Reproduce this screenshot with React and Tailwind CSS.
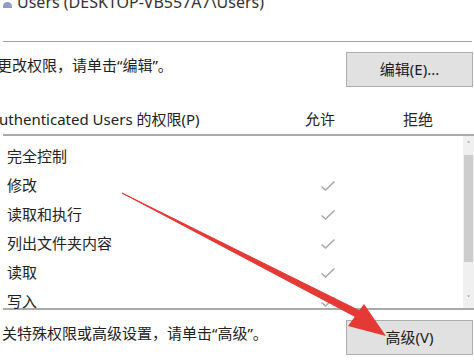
import React from 'react';

const FONT = { fontFamily: '"Noto Sans", "Noto Sans CJK SC", sans-serif' };

const ROWS = [
  { label: '完全控制', allow: false },
  { label: '修改', allow: true },
  { label: '读取和执行', allow: true },
  { label: '列出文件夹内容', allow: true },
  { label: '读取', allow: true },
  { label: '写入', allow: true },
];

function Check() {
  return (
    <svg width="16" height="12" viewBox="0 0 16 12" fill="none">
      <path d="M1.5 6.5 L5.5 10 L14.5 1.5" stroke="#a8a8a8" strokeWidth="1.6" />
    </svg>
  );
}

function Button({ children }) {
  return (
    <div className="w-[127px] h-[35px] bg-[#e1e1e1] border border-[#adadad] flex items-center justify-center text-[15px] text-[#1a1a1a]">
      {children}
    </div>
  );
}

export default function App() {
  return (
    <div
      className="relative w-[474px] h-[364px] overflow-hidden bg-white text-[#222]"
      style={FONT}
    >
      {/* object name, cut at top */}
      <div className="flex items-center gap-[5px] pl-[3px] -mt-[9px] h-[22px] text-[16px] leading-none text-[#333]">
        <span className="w-[9px] h-[6px] mt-[6px] rounded-t-full bg-[#8aa0c4]" />
        <span>Users (DESKTOP-VB557A7\Users)</span>
      </div>

      <div className="mt-[28px] ml-[3px] mr-[2px] h-px bg-[#a0a0a0]" />

      {/* edit row */}
      <div className="mt-[10px] flex items-start justify-between">
        <span className="text-[15px] leading-none mt-[6px] -ml-[3px]">更改权限，请单击“编辑”。</span>
        <div className="mr-[1px]">
          <Button>编辑(E)...</Button>
        </div>
      </div>

      {/* header */}
      <div className="mt-[22px] flex items-center h-[20px] text-[15px] leading-none">
        <span className="-ml-[1px] w-[306px]">uthenticated Users 的权限(P)</span>
        <span className="w-[98px]">允许</span>
        <span>拒绝</span>
      </div>

      {/* permission list */}
      <div className="mt-[5px] ml-[3px] mr-0 flex border-t-2 border-b-2 border-[#aaaaaa] h-[176px]">
        <div className="flex-1 pt-[6px]">
          {ROWS.map((r) => (
            <div key={r.label} className="h-[29px] flex items-center text-[15px] leading-none">
              <span className="pl-[4px] w-[315px]">{r.label}</span>
              <span className="w-[20px] flex justify-center">{r.allow && <Check />}</span>
            </div>
          ))}
        </div>
        <div className="w-[11px] bg-[#f0f0f0] flex flex-col items-center">
          <span className="text-[9px] leading-none text-[#555] mt-[4px]">&#x2c4;</span>
          <div className="mt-[6px] w-[9px] h-[107px] bg-[#cdcdcd]" />
          <div className="flex-1" />
          <span className="text-[9px] leading-none text-[#555] mb-[5px]">&#x2c5;</span>
        </div>
      </div>

      {/* advanced row */}
      <div className="mt-[10px] flex items-start justify-between">
        <span className="text-[15px] leading-none mt-[6px] ml-[2px]">关特殊权限或高级设置，请单击“高级”。</span>
        <div className="mr-[1px]">
          <Button>高级(V)</Button>
        </div>
      </div>

      {/* red annotation arrow */}
      <svg className="absolute inset-0 pointer-events-none" width="474" height="364" viewBox="0 0 474 364">
        <path d="M122 193 L356 317 L360 311 L122 193 Z" fill="#e53935" stroke="#e53935" strokeWidth="1" strokeLinejoin="round" />
        <polygon points="386,336 348,326 364,304" fill="#e53935" />
      </svg>
    </div>
  );
}
